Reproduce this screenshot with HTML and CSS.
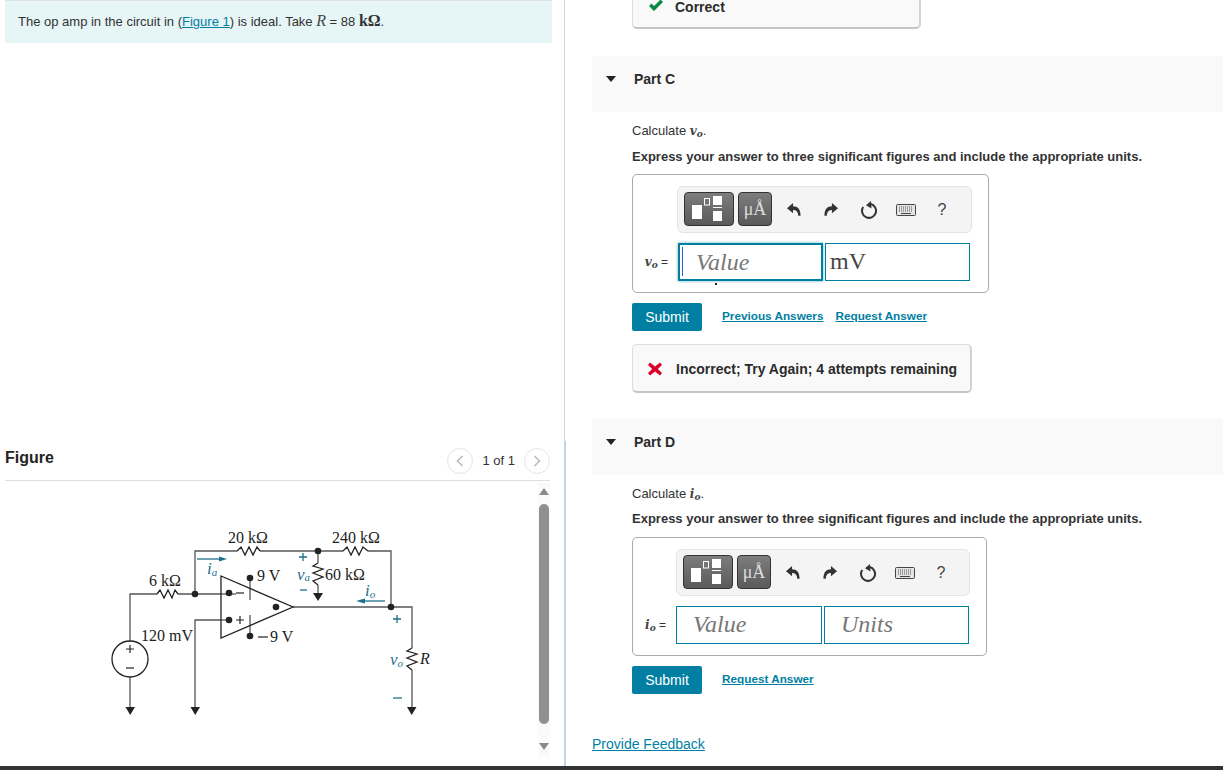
FILE: index.html
```html
<!DOCTYPE html>
<html lang="en">
<head>
    <meta charset="UTF-8">
    <title>Op Amp Circuit - Parts C and D</title>
    <link rel="stylesheet" href="styles.css">
</head>
<body>
    <svg class="icon-defs" width="0" height="0">
        <defs>
            <symbol id="icon-templates" viewBox="0 0 50 34">
                <rect x="8" y="13" width="10" height="14" fill="#fff"/>
                <rect x="20.500" y="6.500" width="5" height="6.500" fill="none" stroke="#fff" stroke-width="1"/>
                <rect x="29" y="4" width="9" height="9" fill="#fff"/>
                <rect x="29" y="15" width="9" height="1" fill="#fff"/>
                <rect x="29" y="19" width="9" height="10" fill="#fff"/>
            </symbol>
            <symbol id="icon-undo" viewBox="0 0 16 16">
                <path d="M0.500 6 L7 0.500 V4 C12 4 15 7 15 14 L12.500 14 C12.500 10 10.500 8 7 8 V11.500 Z" fill="#333"/>
            </symbol>
            <symbol id="icon-reset" viewBox="0 0 18 18">
                <path d="M10.500 3 A7 7 0 1 1 3.200 6" fill="none" stroke="#333" stroke-width="2"/>
                <path d="M11 0 L11.500 7.500 L6 4.200 Z" fill="#333"/>
            </symbol>
            <symbol id="icon-keyboard" viewBox="0 0 20 12">
                <rect x="0.500" y="0.500" width="19" height="11" rx="1" fill="#e4e4e4" stroke="#444"/>
                <path d="M3 3H17M3 5H17M3 7H17" stroke="#555" stroke-width="1" stroke-dasharray="1 1"/>
                <path d="M5 9.500H15" stroke="#444" stroke-width="1"/>
            </symbol>
        </defs>
    </svg>

    <div class="app">
        <div class="left-pane">
            <div class="intro-wrap">
                <p class="intro">The op amp in the circuit in (<a href="#">Figure 1</a>) is ideal. Take <span class="math math-r">R</span> = 88 <span class="unit">kΩ</span>.</p>
            </div>

            <div class="figure-wrap">
                <div class="figure-head">
                    <h2>Figure</h2>
                    <div class="pager">
                        <span class="pager-btn">
                            <svg width="8" height="12" viewBox="0 0 8 12"><path d="M6.500 1 L1.500 6 L6.500 11" fill="none" stroke="#bbb" stroke-width="1.600"/></svg>
                        </span>
                        <span class="pager-text">1 of 1</span>
                        <span class="pager-btn">
                            <svg width="8" height="12" viewBox="0 0 8 12"><path d="M1.500 1 L6.500 6 L1.500 11" fill="none" stroke="#bbb" stroke-width="1.600"/></svg>
                        </span>
                    </div>
                </div>

                <div class="figure-body">
                    <!-- circuit drawn in screen-like coords -->
                    <svg class="circuit" width="440" height="215" viewBox="100 515 440 215">
                        <g fill="none" stroke="#555" stroke-width="1.300">
                            <path d="M130 641V594H157"/>
                            <path d="M178 594H221"/>
                            <path d="M195 594V551H237"/>
                            <path d="M260 551H343"/>
                            <path d="M368 551H391V607"/>
                            <path d="M293 607H412V648"/>
                            <path d="M412 670V708"/>
                            <path d="M130 677V708"/>
                            <path d="M221 620H195V708"/>
                            <path d="M221 594H236"/>
                            <path d="M221 620H232"/>
                            <path d="M318 551V563"/>
                            <path d="M318 585V594"/>
                            <path d="M250 580V600"/>
                            <path d="M250 615V636"/>
                        </g>
                        <g fill="none" stroke="#222" stroke-width="1.300">
                            <path d="M157 594L160 590L164 598L168 590L172 598L175 590L178 594"/>
                            <path d="M237 551L241 547L245 555L249 547L253 555L257 547L260 551"/>
                            <path d="M343 551L347 547L351 555L355 547L359 555L363 547L368 551"/>
                            <path d="M318 563L313 566L323 569L313 573L323 577L313 581L318 585"/>
                            <path d="M412 648L407 651L417 654L407 658L417 662L407 666L412 670"/>
                            <path d="M221 576L293 607L221 638Z"/>
                            <circle cx="130" cy="659" r="18"/>
                        </g>
                        <g fill="#222">
                            <circle cx="195" cy="594" r="3.300"/>
                            <circle cx="229" cy="593" r="3.300"/>
                            <circle cx="229" cy="620" r="3.300"/>
                            <circle cx="250" cy="578" r="3.300"/>
                            <circle cx="250" cy="636" r="3.300"/>
                            <circle cx="276" cy="607" r="3.300"/>
                            <circle cx="318" cy="551" r="3.300"/>
                            <circle cx="391" cy="607" r="3.300"/>
                            <path d="M125.500 707H135L130.200 715Z"/>
                            <path d="M190.500 707H200L195.200 715Z"/>
                            <path d="M407 707H416.500L411.700 715Z"/>
                            <path d="M313 593H323L318 601Z"/>
                        </g>
                        <g stroke="#222" stroke-width="1.200">
                            <path d="M236 593H244"/>
                            <path d="M236 620H244M240 616V624"/>
                            <path d="M126 649H134M130 645V653"/>
                            <path d="M126 668H134"/>
                            <path d="M258 637H268"/>
                        </g>
                        <g stroke="#1f6f8f" stroke-width="1.300" fill="#1f6f8f">
                            <path d="M197 559H220"/>
                            <path d="M219 556.500L227 559L219 561.500Z" stroke="none"/>
                            <path d="M364 601H385"/>
                            <path d="M365 598.500L356 601L365 603.500Z" stroke="none"/>
                            <path d="M299 557H307M303 553V561" fill="none"/>
                            <path d="M300 590H307" fill="none"/>
                            <path d="M393 619H401M397 615V623" fill="none"/>
                            <path d="M393 698H402" fill="none"/>
                        </g>
                        <g class="circuit-text">
                            <text x="228" y="543">20 kΩ</text>
                            <text x="332" y="543">240 kΩ</text>
                            <text x="149" y="586">6 kΩ</text>
                            <text x="325" y="580">60 kΩ</text>
                            <text x="257" y="581">9 V</text>
                            <text x="270" y="642">9 V</text>
                            <text x="141" y="641">120 mV</text>
                            <text class="var-dark" x="420" y="664">R</text>
                        </g>
                        <g class="circuit-blue">
                            <text class="var" x="207" y="574">i<tspan class="sub" dy="2">a</tspan></text>
                            <text class="var" x="297" y="580">v<tspan class="sub" dy="1">a</tspan></text>
                            <text class="var" x="365" y="596">i<tspan class="sub" dy="2">o</tspan></text>
                            <text class="var" x="390" y="665">v<tspan class="sub" dy="2">o</tspan></text>
                        </g>
                    </svg>

                    <div class="scrollbar">
                        <span class="arrow-up"></span>
                        <span class="thumb"></span>
                        <span class="arrow-down"></span>
                    </div>
                </div>
            </div>
        </div>

        <div class="right-pane">
            <div class="feedback feedback-correct">
                <svg width="16" height="13" viewBox="0 0 16 13"><path d="M1 7 L3.500 4.500 L6 7 L12.500 0.500 L15 3 L6 12 Z" fill="#0a8a43"/></svg>
                <span>Correct</span>
            </div>

            <div class="part-head">
                <span class="caret-down"></span>
                <h3>Part C</h3>
            </div>
            <div class="part">
                <p class="prompt">Calculate <span class="math">v<sub>o</sub></span>.</p>
                <p class="prompt prompt-bold">Express your answer to three significant figures and include the appropriate units.</p>
                <div class="answer">
                    <div class="toolbar">
                        <span class="tool-btn tool-wide"><svg width="50" height="34"><use href="#icon-templates"/></svg></span>
                        <span class="tool-btn tool-units">μÅ</span>
                        <span class="tool-icon undo"><svg width="15" height="15"><use href="#icon-undo"/></svg></span>
                        <span class="tool-icon redo"><svg class="flip" width="15" height="15"><use href="#icon-undo"/></svg></span>
                        <span class="tool-icon reset"><svg width="18" height="18"><use href="#icon-reset"/></svg></span>
                        <span class="tool-icon kbd"><svg width="20" height="12"><use href="#icon-keyboard"/></svg></span>
                        <span class="tool-icon help">?</span>
                    </div>
                    <div class="input-row">
                        <span class="var-label"><span class="math">v<sub>o</sub></span> =</span>
                        <div class="field field-focus"><span class="placeholder">Value</span></div>
                        <div class="field"><span class="unit-value">mV</span></div>
                    </div>
                </div>
                <div class="actions">
                    <button class="submit">Submit</button>
                    <a href="#">Previous Answers</a>
                    <a href="#">Request Answer</a>
                </div>
                <div class="feedback feedback-wrong">
                    <svg width="14" height="14" viewBox="0 0 14 14"><path d="M2 0.500 L7 4.500 L12 0.500 L14 3 L9.800 7 L14 11 L12 13.500 L7 9.500 L2 13.500 L0 11 L4.200 7 L0 3 Z" fill="#d9002b"/></svg>
                    <span>Incorrect; Try Again; 4 attempts remaining</span>
                </div>
            </div>

            <div class="part-head">
                <span class="caret-down"></span>
                <h3>Part D</h3>
            </div>
            <div class="part part-d">
                <p class="prompt">Calculate <span class="math">i<sub>o</sub></span>.</p>
                <p class="prompt prompt-bold">Express your answer to three significant figures and include the appropriate units.</p>
                <div class="answer answer-d">
                    <div class="toolbar">
                        <span class="tool-btn tool-wide"><svg width="50" height="34"><use href="#icon-templates"/></svg></span>
                        <span class="tool-btn tool-units">μÅ</span>
                        <span class="tool-icon undo"><svg width="15" height="15"><use href="#icon-undo"/></svg></span>
                        <span class="tool-icon redo"><svg class="flip" width="15" height="15"><use href="#icon-undo"/></svg></span>
                        <span class="tool-icon reset"><svg width="18" height="18"><use href="#icon-reset"/></svg></span>
                        <span class="tool-icon kbd"><svg width="20" height="12"><use href="#icon-keyboard"/></svg></span>
                        <span class="tool-icon help">?</span>
                    </div>
                    <div class="input-row">
                        <span class="var-label"><span class="math">i<sub>o</sub></span> =</span>
                        <div class="field"><span class="placeholder">Value</span></div>
                        <div class="field"><span class="placeholder">Units</span></div>
                    </div>
                </div>
                <div class="actions">
                    <button class="submit">Submit</button>
                    <a href="#">Request Answer</a>
                </div>
            </div>

            <a class="provide" href="#">Provide Feedback</a>
        </div>
    </div>
    <div class="bottom-bar"></div>
</body>
</html>
```

FILE: styles.css
```css
/* Basic Reset & Body Styling */
* {
    box-sizing: border-box;
}

body {
    font-family: 'Liberation Sans', Arial, sans-serif;
    margin: 0;
    height: 770px;
    overflow: hidden;
    background-color: #ffffff;
    color: #333;
}

a {
    color: #007fa3;
}

.icon-defs {
    position: absolute;
}

.app {
    display: flex;
    height: 766px;
    overflow: hidden;
}

.bottom-bar {
    height: 4px;
    background-color: #333;
}

/* Math text */
.math {
    font-family: 'DejaVu Serif', serif;
    font-style: italic;
    font-weight: 700;
    font-size: 12px;
    line-height: 0;
    color: #444;
}

.math sub {
    font-size: 9px;
    line-height: 0;
    vertical-align: -2px;
}

.math-r {
    font-family: 'Liberation Serif', serif;
    font-weight: 400;
    font-size: 16px;
}

.unit {
    font-family: 'Liberation Serif', serif;
    font-weight: 700;
    font-size: 16px;
    line-height: 0;
}

/* Left pane */
.left-pane {
    width: 566px;
    flex-shrink: 0;
    display: flex;
    flex-direction: column;
}

.intro-wrap {
    height: 441px;
    padding: 0 12px 0 5px;
    border-right: 1px solid #cdd3da;
    margin-right: 1px;
}

.intro {
    margin: 0;
    height: 43px;
    padding: 13px 13px 0;
    font-size: 13px;
    line-height: 16px;
    background-color: #e6f5f6;
    border-top: 1px solid #dfe3e6;
}

.figure-wrap {
    flex: 1;
    padding-left: 5px;
    border-right: 2px solid #c3d4e6;
}

.figure-head {
    width: 545px;
    height: 40px;
    display: flex;
    align-items: center;
    justify-content: space-between;
    border-bottom: 1px solid #dedede;
}

.figure-head h2 {
    margin: -6px 0 0;
    font-size: 16px;
    line-height: 32px;
    color: #222;
}

.pager {
    display: flex;
    align-items: center;
    gap: 9px;
}

.pager-btn {
    width: 26px;
    height: 26px;
    border: 1px solid #e6e6e6;
    border-radius: 50%;
    display: flex;
    align-items: center;
    justify-content: center;
}

.pager-text {
    font-size: 13px;
}

.figure-body {
    display: flex;
    height: 285px;
    padding-top: 2px;
}

.circuit {
    flex-shrink: 0;
    margin: 32px 0 0 95px;
}

.circuit-text text {
    font-family: 'Liberation Serif', serif;
    font-size: 16px;
    fill: #222;
}

.circuit-text .var-dark {
    font-style: italic;
}

.circuit-blue text {
    font-family: 'Liberation Serif', serif;
    font-style: italic;
    font-size: 17px;
    fill: #1f6f8f;
}

.circuit-blue .sub {
    font-size: 11px;
}

.scrollbar {
    width: 12px;
    height: 274px;
    margin-left: -2px;
    background-color: #fafafa;
    display: flex;
    flex-direction: column;
    align-items: center;
    position: relative;
}

.arrow-up {
    margin-top: 5px;
    border: 5px solid transparent;
    border-top: 0;
    border-bottom: 7px solid #8a8a8a;
}

.thumb {
    width: 10px;
    height: 220px;
    margin: 9px 0 19px;
    background-color: #8f8f8f;
    border-radius: 5px;
}

.arrow-down {
    border: 5px solid transparent;
    border-bottom: 0;
    border-top: 7px solid #8a8a8a;
}

/* Right pane */
.right-pane {
    flex: 1;
    padding-left: 26px;
}

.feedback {
    display: flex;
    align-items: center;
    gap: 14px;
    padding-left: 15px;
    font-size: 14px;
    font-weight: 700;
    color: #2b2b2b;
    background-color: #f9f9f9;
    border: 1px solid #ddd;
    border-bottom: 2px solid #c4c4c4;
    border-right: 2px solid #d2d2d2;
    border-radius: 5px;
}

/* the pane is scrolled, so the Part B result sits partly above the top edge */
.feedback-correct {
    width: 289px;
    height: 50px;
    margin: -21px 0 27px 40px;
    align-items: flex-start;
    padding-top: 19px;
    gap: 11px;
}

.feedback-wrong {
    width: 340px;
    height: 49px;
    padding-top: 1px;
}

.part-head {
    height: 56px;
    display: flex;
    align-items: flex-start;
    padding: 15px 0 0 14px;
    background-color: #f9f9f9;
}

.part-head h3 {
    margin: 0 0 0 18px;
    font-size: 14px;
    line-height: 16px;
    color: #2b2b2b;
}

.caret-down {
    margin-top: 5px;
    border: 5.500px solid transparent;
    border-bottom: 0;
    border-top: 6px solid #222;
}

.part {
    padding: 10px 0 0 40px;
    height: 307px;
}

.part-d {
    height: 260px;
}

.prompt {
    margin: 0;
    font-size: 13px;
    line-height: 17px;
}

.prompt-bold {
    margin-top: 9px;
    font-weight: 700;
    font-size: 13px;
}

.part-d .prompt-bold {
    margin-top: 8px;
}

/* Answer widget */
.answer {
    width: 357px;
    height: 119px;
    margin-top: 9px;
    padding: 11px 0 0 44px;
    border: 1px solid #aaa;
    border-radius: 5px;
}

.part-d .answer {
    margin-top: 10px;
}

.toolbar {
    position: relative;
    width: 295px;
    height: 47px;
    display: flex;
    align-items: center;
    gap: 4px;
    padding-left: 6px;
    padding-bottom: 1px;
    background-color: #f4f4f4;
    border: 1px solid #e4e4e4;
    border-radius: 6px;
}

.tool-btn {
    height: 34px;
    flex-shrink: 0;
    display: flex;
    align-items: center;
    justify-content: center;
    background: linear-gradient(#7d7d7d, #5a5a5a);
    border: 1px solid #333;
    border-radius: 4px;
}

.tool-btn svg {
    flex-shrink: 0;
}

.tool-wide {
    width: 50px;
}

.tool-units {
    width: 34px;
    font-family: 'Liberation Serif', serif;
    font-size: 18px;
    color: #ddd;
}

.tool-icon {
    position: absolute;
    top: 50%;
    transform: translate(-50%, -50%);
    display: flex;
    color: #444;
}

.undo { left: 116px; }
.redo { left: 153px; }
.reset { left: 191px; }
.kbd { left: 228px; }

.help {
    left: 264px;
    font-size: 16px;
}

.flip {
    transform: scaleX(-1);
}

.input-row {
    display: flex;
    gap: 2px;
    margin-top: 10px;
    margin-left: -44px;
}

.var-label {
    width: 43px;
    flex-shrink: 0;
    padding-right: 8px;
    text-align: right;
    line-height: 38px;
    font-size: 12px;
}

.field {
    position: relative;
    width: 145px;
    height: 38px;
    border: 1px solid #007fa3;
    font-family: 'Liberation Serif', serif;
    font-size: 24px;
    line-height: 35px;
}

.field-focus {
    border-width: 2px;
    box-shadow: 0 0 3px #5fb4cc;
}

.field-focus::before {
    content: "";
    position: absolute;
    left: 2px;
    top: 2px;
    width: 1px;
    height: 29px;
    background-color: #2a5fd6;
}

/* stray marker under the focused field */
.field-focus::after {
    content: "";
    position: absolute;
    left: 35px;
    top: 38px;
    width: 2px;
    height: 2px;
    background-color: #222;
}

.placeholder {
    padding-left: 16px;
    font-style: italic;
    color: #777;
}

.unit-value {
    padding-left: 4px;
    color: #444;
}

.answer-d {
    width: 355px;
    padding-left: 43px;
}

.answer-d .toolbar {
    width: 294px;
}

.answer-d .input-row {
    margin-left: -43px;
}

.answer-d .var-label {
    width: 41px;
}

.answer-d .field:first-of-type {
    width: 146px;
}

/* Actions */
.actions {
    display: flex;
    align-items: center;
    gap: 12px;
    margin: 10px 0 13px;
}

.actions a {
    font-size: 11.750px;
    font-weight: 700;
    margin-top: -3px;
}

.submit {
    width: 70px;
    height: 28px;
    margin-right: 8px;
    padding: 0;
    font-family: inherit;
    font-size: 14px;
    color: #ffffff;
    background-color: #007fa3;
    border: none;
    border-radius: 2px;
}

.provide {
    font-size: 14px;
}
```
